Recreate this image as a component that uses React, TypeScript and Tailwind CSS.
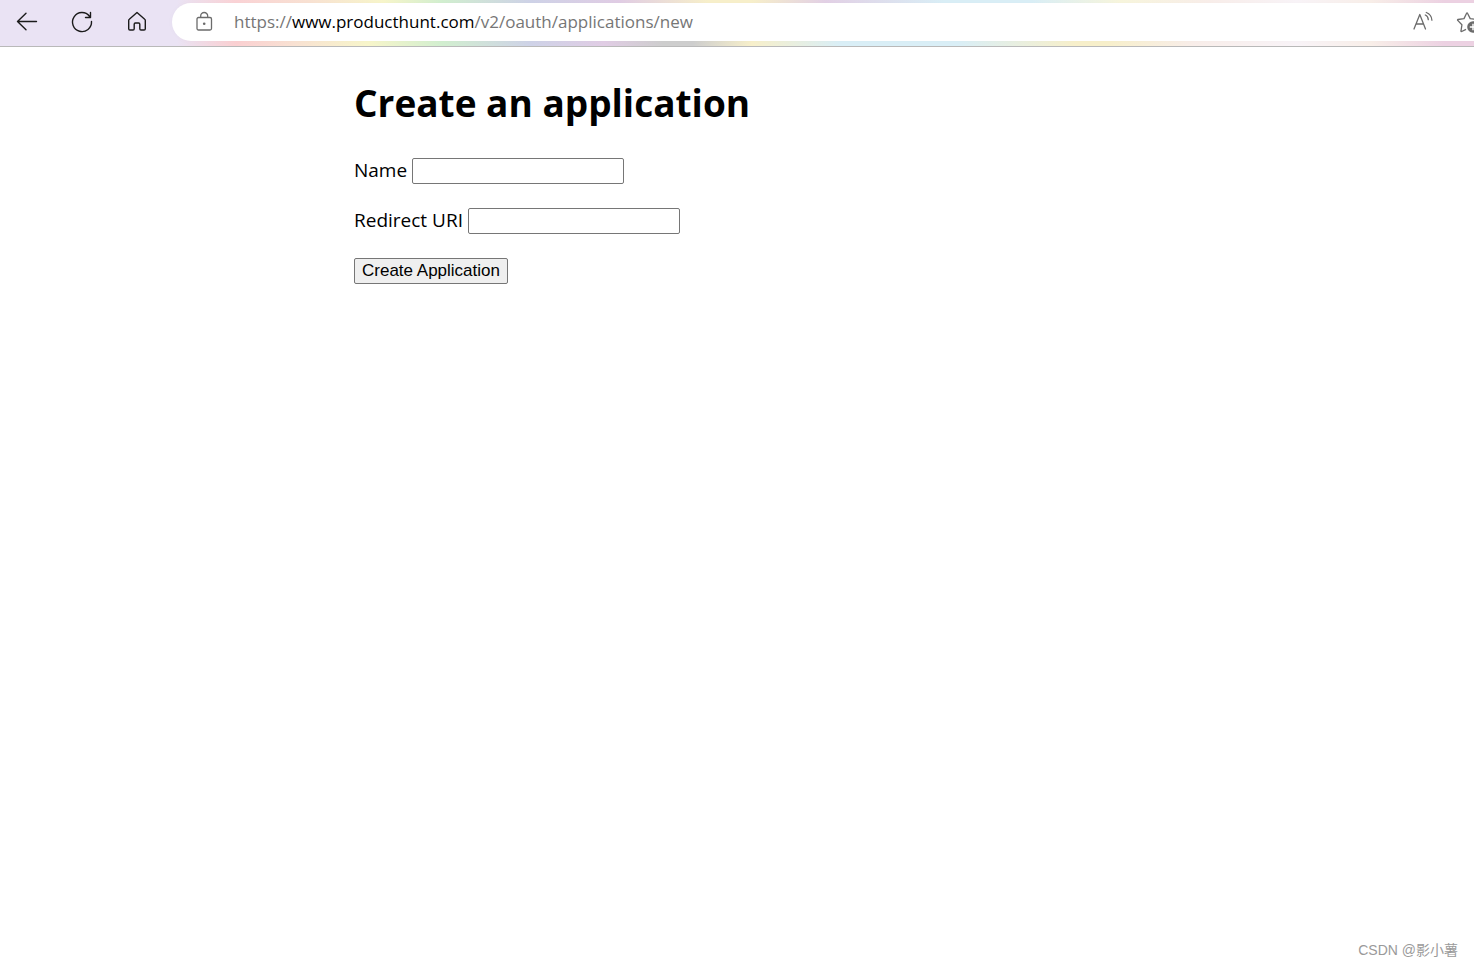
function BackIcon() {
  return (
    <svg className="size-6" viewBox="0 0 24 24" fill="none" stroke="currentColor" strokeWidth="1.4" strokeLinecap="round" strokeLinejoin="round">
      <path d="M21.5 11.5h-19M11 3.2l-8.5 8.3 8.500 8.300" />
    </svg>
  );
}

function ReloadIcon() {
  return (
    <svg className="size-6" viewBox="0 0 24 24" fill="none" stroke="currentColor" strokeWidth="1.4" strokeLinecap="round" strokeLinejoin="round">
      <path d="M21.5 11.5A9.5 9.5 0 1 1 19.5 6.2M20.500 2.500v5h-5" />
    </svg>
  );
}

function HomeIcon() {
  return (
    <svg className="size-6" viewBox="0 0 24 24" fill="none" stroke="currentColor" strokeWidth="1.4" strokeLinejoin="round">
      <path d="M12 2.5l7.700 6.700c.4.3.6.8.6 1.300v8.300c0 .7-.5 1.200-1.200 1.200H16c-.7 0-1.200-.5-1.200-1.200v-4.600c0-.7-.5-1.200-1.200-1.200h-3.200c-.7 0-1.200.5-1.200 1.200v4.600c0 .7-.5 1.200-1.200 1.200H4.900c-.7 0-1.200-.5-1.200-1.200V10.500c0-.5.2-1 .6-1.300z" />
    </svg>
  );
}

function LockIcon() {
  return (
    <svg className="size-6 shrink-0 text-[#6b6b6b]" viewBox="0 0 24 24" fill="none" stroke="currentColor" strokeWidth="1.3">
      <rect x="5" y="7.5" width="14.5" height="12.5" rx="1.5" />
      <path d="M8.7 7.5V6a3.500 3.500 0 0 1 7 0v1.500" />
      <circle cx="12.2" cy="13.8" r="1.3" fill="currentColor" stroke="none" />
    </svg>
  );
}

function ReadAloudIcon() {
  return (
    <svg className="size-6" viewBox="0 0 24 24" fill="none" stroke="currentColor" strokeWidth="1.3" strokeLinecap="round" strokeLinejoin="round">
      <path d="M2 19L7.8 4.500l5.700 14.500M4 14h7.500M13.300 5c1.800.8 2.900 2.500 3 4.700M14.300 2.500c3.500 1.300 5.400 4 5.600 7.700" />
    </svg>
  );
}

function FavoriteIcon() {
  return (
    <svg className="size-6" viewBox="0 0 24 24" fill="none">
      <path
        d="M10 19.3l-4.300 2.200c-.5.2-.8 0-.7-.5l.9-6.200-4.200-4.400c-.3-.4-.2-.8.3-.9l6-.9 2.600-5.400c.3-.5.7-.5.9 0l2.700 5.400 6 .9c.5.1.6.5.3.9"
        stroke="currentColor"
        strokeWidth="1.3"
        strokeLinejoin="round"
      />
      <circle cx="17" cy="17" r="5.8" fill="currentColor" />
      <path d="M17 13.800v6.400M13.800 17h6.400" stroke="white" strokeWidth="1.4" />
    </svg>
  );
}

function Toolbar() {
  return (
    <header className="relative flex h-[47px] items-center overflow-hidden border-b border-[#b9b9b9] pb-0.5 pl-[15px]">
      {/* theme colours, seen above and below the address bar */}
      <div className="absolute inset-0 -z-10 flex flex-col">
        <div className="flex-1 bg-[linear-gradient(90deg,#eae3f4_0%,#eae3f4_12%,#fbd3d6_16%,#f9e2d3_21%,#f8f6cb_26%,#d2efd0_30%,#cfd3e8_36%,#e1cde5_42%,#f8f0cb_48%,#f8f0cb_51%,#e3d1e6_56%,#daeff7_64%,#daeff7_70%,#f8f6dd_76%,#f9eeea_82%,#f9f4f8_88%,#f9efe9_93%,#edd2e3_98%,#edd2e3_100%)]"></div>
        <div className="flex-1 bg-[linear-gradient(90deg,#eae3f4_0%,#eae3f4_12%,#fbd0d2_16%,#f9e2d3_20%,#f8f6cb_25%,#d2efd0_30%,#cfd3e8_36%,#e1cde5_41%,#cecece_45%,#cecece_47%,#f8f0cb_51%,#daeff7_57%,#daeff7_65%,#f8f0cb_73%,#f8f0cb_75%,#f9eeea_81%,#f9f4f8_88%,#f9efe9_93%,#edd2e3_98%,#edd2e3_100%)]"></div>
      </div>

      <nav className="flex shrink-0 gap-[31px] text-[#1b1b1b]">
        <button type="button" aria-label="Back"><BackIcon /></button>
        <button type="button" aria-label="Refresh"><ReloadIcon /></button>
        <button type="button" aria-label="Home"><HomeIcon /></button>
      </nav>

      <div className="-mr-8 ml-[23px] flex h-[38px] flex-1 items-center rounded-full bg-white pr-[26px] pl-5 shadow-[0_0_6px_#00000006]">
        <LockIcon />
        <div className="relative ml-[18px] flex-1">
          <label htmlFor="address" className="block text-[17px] leading-6 whitespace-nowrap text-[#767676]">
            https://<span className="text-black">www.producthunt.com</span>/v2/oauth/applications/new
          </label>
          <input id="address" type="text" className="absolute inset-0 w-full bg-transparent outline-none" />
        </div>
        <div className="flex gap-5 text-[#6b6b6b]">
          <button type="button" aria-label="Read aloud"><ReadAloudIcon /></button>
          <button type="button" aria-label="Add to favorites"><FavoriteIcon /></button>
        </div>
      </div>
    </header>
  );
}

function Field({ id, label }: { id: string; label: string }) {
  return (
    <div className="flex items-center gap-[5px]">
      <label htmlFor={id} className="pb-0.5 text-[19px] leading-6">{label}</label>
      <input
        id={id}
        type="text"
        className="h-[26px] w-[212px] rounded-xs border border-[#767676] bg-white px-1 font-['Liberation_Sans',sans-serif] text-base"
      />
    </div>
  );
}

export default function App() {
  return (
    <div className="relative isolate flex min-h-screen flex-col bg-white font-['Open_Sans','Noto_Sans_CJK_SC',sans-serif] text-black">
      <Toolbar />

      <main className="mx-auto w-full max-w-[766px] pt-8">
        <h1 className="text-[37px] leading-12 font-bold">Create an application</h1>
        <form className="mt-[31px] flex flex-col items-start gap-6">
          <Field id="name" label="Name" />
          <Field id="redirect-uri" label="Redirect URI" />
          <button
            type="button"
            className="h-[26px] rounded-xs border border-[#767676] bg-[#efefef] px-[7px] font-['Liberation_Sans',sans-serif] text-[17px] leading-6"
          >
            Create Application
          </button>
        </form>
      </main>

      <p className="absolute right-4 bottom-1 font-['Liberation_Sans','Noto_Sans_CJK_SC',sans-serif] text-sm leading-6 text-[#9a9a9a]">
        CSDN @影小薯
      </p>
    </div>
  );
}
